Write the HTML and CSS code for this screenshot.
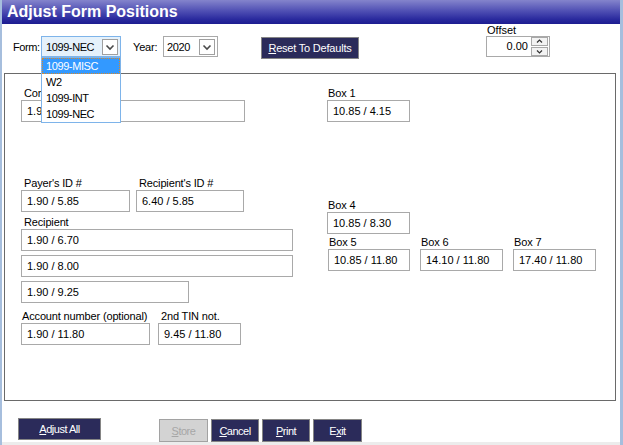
FILE: index.html
```html
<!DOCTYPE html>
<html>
<head>
<meta charset="utf-8">
<title>Adjust Form Positions</title>
<link rel="stylesheet" href="styles.css">
</head>
<body>
<div class="window">
  <div class="titlebar">Adjust Form Positions</div>

  <div class="toolbar">
    <div class="inline">
      <span class="lbl-form">Form:</span>
      <div class="combo combo-focus">
        <span class="combo-text">1099-NEC</span>
        <span class="combo-btn"><svg width="14" height="14" viewBox="0 0 14 14"><path d="M3.5 5.5 L7 9 L10.5 5.5" fill="none" stroke="#4a4a4a" stroke-width="1.6"/></svg></span>
        <div class="dropdown">
          <div class="opt sel">1099-MISC</div>
          <div class="opt">W2</div>
          <div class="opt">1099-INT</div>
          <div class="opt">1099-NEC</div>
        </div>
      </div>
    </div>
    <div class="inline year">
      <span class="lbl-year">Year:</span>
      <div class="combo combo-year">
        <span class="combo-text">2020</span>
        <span class="combo-btn"><svg width="14" height="14" viewBox="0 0 14 14"><path d="M3.5 5.5 L7 9 L10.5 5.5" fill="none" stroke="#4a4a4a" stroke-width="1.6"/></svg></span>
      </div>
    </div>
    <button class="btn btn-reset"><span><u>R</u>eset To Defaults</span></button>
    <div class="offset">
      <div class="offset-lbl">Offset</div>
      <div class="spin">
        <span class="spin-val">0.00</span>
        <span class="spin-btns">
          <span class="spin-b"><svg width="15" height="7" viewBox="0 0 15 7"><path d="M5 4.5 L7.5 2 L10 4.5" fill="none" stroke="#333" stroke-width="1.2"/></svg></span>
          <span class="spin-b"><svg width="15" height="7" viewBox="0 0 15 7"><path d="M5 2.5 L7.5 5 L10 2.5" fill="none" stroke="#333" stroke-width="1.2"/></svg></span>
        </span>
      </div>
    </div>
  </div>

  <div class="panel">
    <div class="col-left">
      <div class="grp w224">
        <div class="lbl">Company</div>
        <div class="inp">1.90 / 4.15</div>
      </div>

      <div class="row gap6 payer">
        <div class="grp w109">
          <div class="lbl">Payer's ID #</div>
          <div class="inp">1.90 / 5.85</div>
        </div>
        <div class="grp w108">
          <div class="lbl">Recipient's ID #</div>
          <div class="inp">6.40 / 5.85</div>
        </div>
      </div>

      <div class="grp recipient">
        <div class="lbl">Recipient</div>
        <div class="inp w272">1.90 / 6.70</div>
        <div class="inp w272 stack">1.90 / 8.00</div>
        <div class="inp w168 stack">1.90 / 9.25</div>
      </div>

      <div class="row gap8 account">
        <div class="grp w129">
          <div class="lbl lbl-tight">Account number (optional)</div>
          <div class="inp">1.90 / 11.80</div>
        </div>
        <div class="grp w83">
          <div class="lbl">2nd TIN not.</div>
          <div class="inp">9.45 / 11.80</div>
        </div>
      </div>
    </div>

    <div class="col-right">
      <div class="grp w83">
        <div class="lbl lbl-tight">Box 1</div>
        <div class="inp">10.85 / 4.15</div>
      </div>
      <div class="grp w83 box4">
        <div class="lbl lbl-tight">Box 4</div>
        <div class="inp">10.85 / 8.30</div>
      </div>
      <div class="row gap10 boxes">
        <div class="grp w82">
          <div class="lbl lbl-tight">Box 5</div>
          <div class="inp">10.85 / 11.80</div>
        </div>
        <div class="grp w83">
          <div class="lbl lbl-tight">Box 6</div>
          <div class="inp">14.10 / 11.80</div>
        </div>
        <div class="grp w83">
          <div class="lbl lbl-tight">Box 7</div>
          <div class="inp">17.40 / 11.80</div>
        </div>
      </div>
    </div>
  </div>

  <div class="footer">
    <button class="btn btn-adjust"><span><u>A</u>djust All</span></button>
    <div class="actions">
      <button class="btn btn-disabled w49"><span><u>S</u>tore</span></button>
      <button class="btn w48"><span><u>C</u>ancel</span></button>
      <button class="btn w48"><span><u>P</u>rint</span></button>
      <button class="btn w49"><span>E<u>x</u>it</span></button>
    </div>
  </div>
  <div class="strip"></div>
</div>
</body>
</html>
```

FILE: styles.css
```css
html, body {
  margin: 0;
  padding: 0;
}
body {
  width: 623px;
  height: 445px;
  overflow: hidden;
  font-family: "Liberation Sans", Arial, sans-serif;
  font-size: 11px;
  color: #000;
  background: #fff;
}
.window {
  width: 623px;
  height: 445px;
  box-sizing: border-box;
  border-left: 2px solid #a6bedd;
  border-right: 3px solid #a6bedd;
  display: flex;
  flex-direction: column;
  background: #fff;
}
.titlebar {
  height: 24px;
  flex: none;
  line-height: 24px;
  padding-left: 5px;
  font-size: 16px;
  font-weight: bold;
  color: #fff;
  background: linear-gradient(to bottom, #8484cc 0%, #5050b4 45%, #2a2a9e 80%, #1c1c90 100%);
}

/* toolbar */
.toolbar {
  height: 49px;
  flex: none;
  box-sizing: border-box;
  display: flex;
  align-items: flex-end;
  padding: 0 0 16px 11px;
}
.inline {
  display: flex;
  align-items: center;
}
.lbl-form {
  width: 28px;
  white-space: nowrap;
  letter-spacing: -0.4px;
}
.lbl-year {
  width: 30px;
  white-space: nowrap;
  letter-spacing: -0.2px;
}
.year {
  margin-left: 12px;
}
.combo {
  position: relative;
  height: 21px;
  box-sizing: border-box;
  display: flex;
  align-items: center;
  background: #fff;
  border: 1px solid #a9a9a9;
  letter-spacing: -0.4px;
}
.combo-focus {
  width: 80px;
  padding-left: 4px;
  border-color: #7eb4ea;
  background: #e5f1fb;
}
.combo-year {
  width: 55px;
  padding-left: 3px;
}
.combo-text {
  white-space: nowrap;
}
.combo-btn {
  margin-left: auto;
  margin-right: 2px;
  width: 16px;
  height: 16px;
  box-sizing: border-box;
  border: 1px solid #a0a0a0;
  background: #fff;
  display: flex;
  align-items: center;
  justify-content: center;
}
.combo-btn svg {
  display: block;
}
.dropdown {
  position: absolute;
  left: -1px;
  top: 20px;
  width: 80px;
  box-sizing: border-box;
  border: 1px solid #7eb4ea;
  background: #fff;
  z-index: 5;
}
.opt {
  height: 16px;
  line-height: 16px;
  padding-left: 4px;
  white-space: nowrap;
}
.opt.sel {
  background: #3399ff;
  color: #fff;
  outline: 1px dotted #d9892a;
  outline-offset: -1px;
}

.btn {
  box-sizing: border-box;
  margin: 0;
  padding: 0;
  background: #2b2b5a;
  border: 1px solid #858585;
  color: #fff;
  font-family: "Liberation Sans", Arial, sans-serif;
  font-size: 11px;
  display: flex;
  align-items: center;
  justify-content: center;
  white-space: nowrap;
}
.btn span {
  letter-spacing: -0.5px;
}
.btn-reset {
  margin-left: 43px;
  width: 98px;
  height: 22px;
  margin-bottom: -2px;
}
.btn-reset span {
  letter-spacing: -0.2px;
}

.offset {
  margin-left: 127px;
  display: flex;
  flex-direction: column;
}
.offset-lbl {
  line-height: 12px;
  padding-left: 1px;
}
.spin {
  width: 64px;
  height: 21px;
  box-sizing: border-box;
  border: 1px solid #a9a9a9;
  background: #fff;
  display: flex;
}
.spin-val {
  flex: 1;
  text-align: right;
  line-height: 19px;
  padding-right: 3px;
}
.spin-btns {
  width: 17px;
  display: flex;
  flex-direction: column;
  gap: 1px;
  padding: 0 1px 0 0;
}
.spin-b {
  flex: 1;
  box-sizing: border-box;
  border: 1px solid #a8a8a8;
  background: #f3f3f3;
  display: flex;
  align-items: center;
  justify-content: center;
}
.spin-b svg {
  display: block;
}

/* main panel */
.panel {
  height: 328px;
  flex: none;
  box-sizing: border-box;
  margin: 0 4px 0 2px;
  border: 1px solid #6a6a6a;
  padding: 13px 0 0 16px;
  display: flex;
}
.col-left {
  width: 306px;
  flex: none;
}
.col-right {
  flex: 1;
}
.row {
  display: flex;
}
.gap6 { gap: 6px; }
.gap8 { gap: 8px; }
.gap10 { gap: 10px; }
.grp {
  flex: none;
}
.lbl {
  line-height: 13px;
  height: 13px;
  padding-left: 3px;
  white-space: nowrap;
  letter-spacing: -0.15px;
}
.lbl-tight {
  padding-left: 1px;
}
.inp {
  height: 22px;
  box-sizing: border-box;
  border: 1px solid #a9a9a9;
  background: #fff;
  padding-left: 5px;
  line-height: 20px;
  white-space: nowrap;
  overflow: hidden;
}
.w224 { width: 224px; }
.w109 { width: 109px; }
.w108 { width: 108px; }
.w129 { width: 129px; }
.w83 { width: 83px; }
.w82 { width: 82px; }
.w272 { width: 272px; }
.w168 { width: 168px; }
.payer { margin-top: 55px; }
.recipient { margin-top: 4px; }
.stack { margin-top: 4px; }
.account { margin-top: 7px; }
.box4 { margin-top: 77px; }
.boxes { margin-top: 2px; margin-left: 1px; }

/* footer */
.footer {
  height: 41px;
  flex: none;
  box-sizing: border-box;
  display: flex;
  align-items: flex-start;
  padding: 17px 0 0 16px;
}
.btn-adjust {
  width: 83px;
  height: 22px;
}
.actions {
  margin-left: 58px;
  margin-top: 1px;
  display: flex;
  gap: 3px;
}
.actions .btn {
  height: 23px;
}
.w49 { width: 49px; }
.w48 { width: 48px; }
.btn-disabled {
  background: #d3d3d3;
  border-color: #a2a2a2;
  color: #a6a6a6;
}
.strip {
  height: 3px;
  flex: none;
  background: #ececec;
}
```
